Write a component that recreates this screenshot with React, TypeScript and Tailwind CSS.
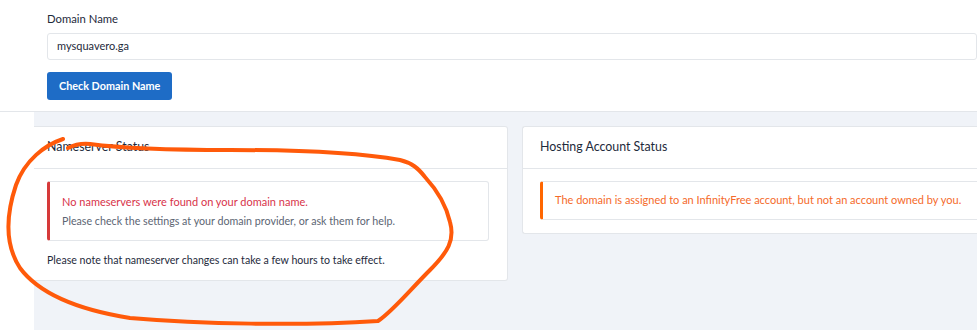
export default function App() {
  return (
    <div className="relative h-[330px] w-[977px] overflow-hidden bg-white font-['Lato',sans-serif] text-[#1e2a3b]">
      <div className="h-[112px] border-b border-[#e3e6ea] pl-[47px] pt-[11px]">
        <label className="block text-[11.3px] leading-[16px]">Domain Name</label>
        <div className="mt-[6px] flex h-[27px] items-center rounded-[3px] border border-[#e3e6ea] pl-[9px] text-[11px]">
          mysquavero.ga
        </div>
        <button className="mt-[12px] h-[28px] rounded-[3px] bg-[#1e6cc6] px-[12px] text-[10.8px] font-bold text-white">
          Check Domain Name
        </button>
      </div>

      <div className="flex h-[218px]">
        <div className="w-[34px] shrink-0 bg-white" />
        <div className="flex flex-1 items-start gap-[14px] bg-[#f0f3f8] pt-[14px]">
          <div className="w-[474px] shrink-0 rounded-r-[3px] border border-l-0 border-[#e3e6ea] bg-white">
            <div className="flex h-[42px] items-center border-b border-[#e3e6ea] pl-[13px] text-[12.4px]">Nameserver Status</div>
            <div className="pb-[10px] pl-[13px] pr-[18px] pt-[12px]">
              <div className="rounded-[3px] border border-l-[3px] border-[#e3e6ea] border-l-[#d63a3a] py-[10px] pl-[12px] text-[10.7px] leading-[19px]">
                <p className="text-[11px] text-[#d8334a]">No nameservers were found on your domain name.</p>
                <p className="text-[#5c6573]">Please check the settings at your domain provider, or ask them for help.</p>
              </div>
              <p className="mt-[10px] text-[10.6px] leading-[19px]">Please note that nameserver changes can take a few hours to take effect.</p>
            </div>
          </div>

          <div className="flex-1 rounded-l-[3px] border border-r-0 border-[#e3e6ea] bg-white">
            <div className="flex h-[42px] items-center border-b border-[#e3e6ea] pl-[17px] text-[12.4px]">Hosting Account Status</div>
            <div className="pb-[13px] pl-[17px] pt-[12px]">
              <div className="flex h-[39px] items-center rounded-l-[3px] border border-r-0 border-l-[3px] border-[#e3e6ea] border-l-[#ff6600] pl-[12px] text-[11px] text-[#f56a2a]">
                The domain is assigned to an InfinityFree account, but not an account owned by you.
              </div>
            </div>
          </div>
        </div>
      </div>

      <svg className="pointer-events-none absolute left-0 top-0" width="977" height="330" viewBox="0 0 977 330" fill="none">
        <path
          d="M63,139 C45,145 25,160 16,185 C6,215 5,245 20,268 C40,295 80,310 130,318 C200,324 300,326 378,321 C392,312 410,290 430,270 C448,252 455,240 450,222 C446,205 437,190 425,177 C418,168 412,163 400,160 C360,153 300,150 230,150 C170,150 120,148 90,144 C80,143 72,146 68,148"
          stroke="#ff5a0a"
          strokeWidth="4"
          strokeLinecap="round"
          strokeLinejoin="round"
        />
      </svg>
    </div>
  );
}
